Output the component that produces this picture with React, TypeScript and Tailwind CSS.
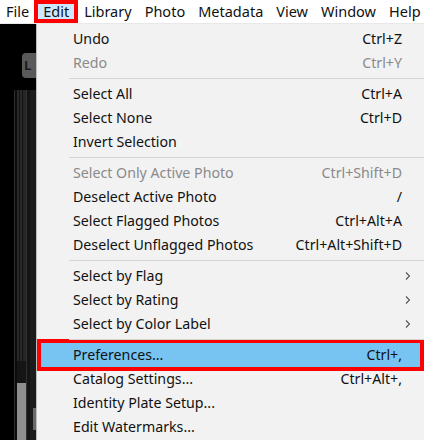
import React from 'react';

type Item =
  | { kind: 'sep' }
  | { kind: 'item'; label: string; shortcut?: string; disabled?: boolean; sub?: boolean; active?: boolean };

const menuBar = ['Library', 'Photo', 'Metadata', 'View', 'Window', 'Help'];

const items: Item[] = [
  { kind: 'item', label: 'Undo', shortcut: 'Ctrl+Z' },
  { kind: 'item', label: 'Redo', shortcut: 'Ctrl+Y', disabled: true },
  { kind: 'sep' },
  { kind: 'item', label: 'Select All', shortcut: 'Ctrl+A' },
  { kind: 'item', label: 'Select None', shortcut: 'Ctrl+D' },
  { kind: 'item', label: 'Invert Selection' },
  { kind: 'sep' },
  { kind: 'item', label: 'Select Only Active Photo', shortcut: 'Ctrl+Shift+D', disabled: true },
  { kind: 'item', label: 'Deselect Active Photo', shortcut: '/' },
  { kind: 'item', label: 'Select Flagged Photos', shortcut: 'Ctrl+Alt+A' },
  { kind: 'item', label: 'Deselect Unflagged Photos', shortcut: 'Ctrl+Alt+Shift+D' },
  { kind: 'sep' },
  { kind: 'item', label: 'Select by Flag', sub: true },
  { kind: 'item', label: 'Select by Rating', sub: true },
  { kind: 'item', label: 'Select by Color Label', sub: true },
  { kind: 'sep' },
  { kind: 'item', label: 'Preferences...', shortcut: 'Ctrl+,', active: true },
  { kind: 'item', label: 'Catalog Settings...', shortcut: 'Ctrl+Alt+,' },
  { kind: 'item', label: 'Identity Plate Setup...' },
  { kind: 'item', label: 'Edit Watermarks...' },
];

const Chevron = () => (
  <svg width="8" height="10" viewBox="0 0 8 10" className="text-[#555]">
    <path d="M2 1.5 L5.5 5 L2 8.5" fill="none" stroke="currentColor" strokeWidth="1.1" />
  </svg>
);

export default function App() {
  return (
    <div
      className="w-[424px] h-[440px] overflow-hidden bg-black text-[14.2px] text-[#111]"
      style={{ fontFamily: '"Noto Sans", "Open Sans", sans-serif' }}
    >
      {/* menu bar */}
      <div className="h-[24px] bg-white flex items-stretch border-b border-[#e8e8e8] text-[14.5px]">
        <div className="pl-[6px] pr-[5px] flex items-center leading-none">File</div>
        <div className="border-[4px] border-[#ff0000] flex">
          <div className="bg-[#cce8ff] pl-[5px] pr-[5px] flex items-center leading-none">Edit</div>
        </div>
        <div className="pl-[6px] flex">
          {menuBar.map((m) => (
            <div key={m} className="px-[6.5px] first:pl-0 flex items-center leading-none">{m}</div>
          ))}
        </div>
      </div>

      <div className="flex h-[416px]">
        {/* Lightroom background strip */}
        <div className="w-[36px] shrink-0 bg-black flex flex-col">
          <div className="mt-[29px] ml-[22px] w-[14px] h-[25px] rounded-l-[4px] bg-[#5a5a5a] flex items-center pl-[2px] text-[13px] font-bold text-[#1a1a1a]">
            L
          </div>
          <div className="mt-[12px] ml-[14px] flex-1 flex">
            <div className="w-[3px] border-l border-[#2e2e2e] bg-[#0c0c0c]" />
            <div className="w-[9px] flex flex-col">
              <div className="h-[271px] flex">
                <div className="w-[2px] bg-[#2a2a2a]" />
                <div className="w-[1px] bg-[#111]" />
                <div className="w-[2px] bg-[#2a2a2a]" />
                <div className="w-[1px] bg-[#111]" />
                <div className="w-[3px] bg-[#262626]" />
              </div>
              <div className="h-[22px] bg-[#151515]" />
              <div className="flex-1 bg-[#8e8e8e]" />
            </div>
            <div className="w-[4px] bg-[#141414] border-l border-[#303030]" />
            <div className="w-[6px] flex flex-col bg-[#1c1c1c]">
              <div className="h-[318px]" />
              <div className="h-[22px] w-[3px] ml-[3px] bg-[#6a6a6a]" />
            </div>
          </div>
        </div>

        {/* dropdown */}
        <div className="flex-1 bg-[#f2f2f2] border-l border-[#bdbdbd] pt-[3px]">
          {items.map((it, i) =>
            it.kind === 'sep' ? (
              <div key={i} className="h-[7px] flex items-center pl-[32px]">
                <div className="h-px w-full bg-[#d4d4d4]" />
              </div>
            ) : it.active ? (
              <div key={i} className="my-[-4px] border-[4px] border-[#ff0000]">
                <div className="h-[24px] bg-[#77c3f2] flex items-center pl-[32px] pr-[18px]">
                  <span className="flex-1">{it.label}</span>
                  <span>{it.shortcut}</span>
                </div>
              </div>
            ) : (
              <div
                key={i}
                className={`h-[24px] flex items-center pl-[36px] pr-[22px] ${it.disabled ? 'text-[#8a8a8a]' : ''}`}
              >
                <span className="flex-1">{it.label}</span>
                {it.shortcut && <span>{it.shortcut}</span>}
                {it.sub && <span className="-mr-[10px]"><Chevron /></span>}
              </div>
            )
          )}
        </div>
      </div>
    </div>
  );
}
